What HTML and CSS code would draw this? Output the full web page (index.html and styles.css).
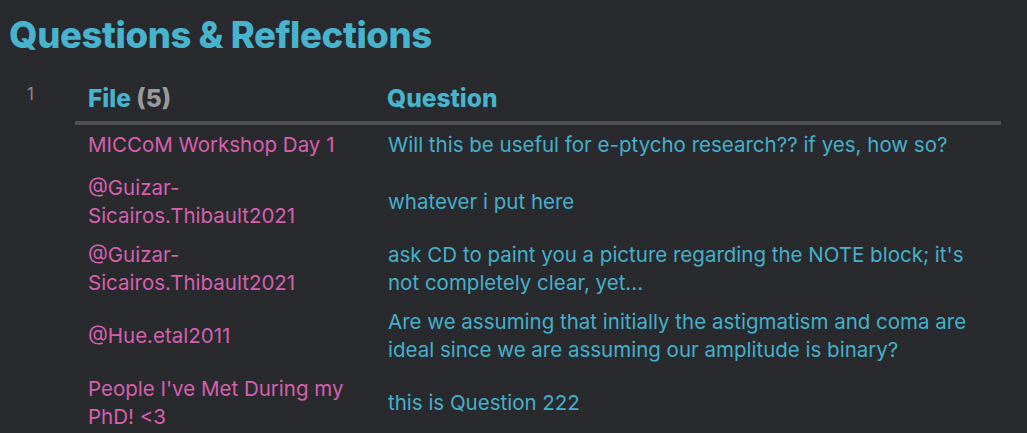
FILE: index.html
```html
<!DOCTYPE html>
<html>
<head>
<meta charset="utf-8">
<link rel="stylesheet" href="styles.css">
</head>
<body>
<div class="page">
  <h1 class="title">Questions &amp; Reflections</h1>
  <div class="block">
    <div class="lineno">1</div>
    <table class="dv">
      <colgroup><col class="c1"><col class="c2"></colgroup>
      <thead>
        <tr><th>File <span class="count">(5)</span></th><th>Question</th></tr>
      </thead>
      <tbody>
        <tr><td class="file">MICCoM Workshop Day 1</td><td class="q">Will this be useful for e-ptycho research?? if yes, how so?</td></tr>
        <tr><td class="file">@Guizar-Sicairos.Thibault2021</td><td class="q">whatever i put here</td></tr>
        <tr><td class="file">@Guizar-Sicairos.Thibault2021</td><td class="q">ask CD to paint you a picture regarding the NOTE block; it's not completely clear, yet...</td></tr>
        <tr><td class="file">@Hue.etal2011</td><td class="q">Are we assuming that initially the astigmatism and coma are ideal since we are assuming our amplitude is binary?</td></tr>
        <tr><td class="file">People I've Met During my PhD! &lt;3</td><td class="q">this is Question 222</td></tr>
      </tbody>
    </table>
  </div>
</div>
</body>
</html>
```

FILE: styles.css
```css
html, body {
  margin: 0;
  padding: 0;
  background: #292a2e;
}
body {
  font-family: Inter, "Noto Sans", sans-serif;
  color: #45b0cb;
}
.page {
  padding: 12px 26px 0 9px;
}
.title {
  margin: 0;
  font-size: 36.5px;
  font-weight: 800;
  line-height: 46px;
  color: #47b3cd;
  letter-spacing: -0.4px;
}
.block {
  display: flex;
  margin-top: 26px;
}
.lineno {
  width: 66px;
  padding-left: 18px;
  box-sizing: border-box;
  flex: none;
  color: #8b8b8b;
  font-size: 17px;
  line-height: 18px;
  padding-top: 1px;
}
.dv {
  border-collapse: collapse;
  width: 926px;
  table-layout: fixed;
}
.c1 { width: 300px; }
.dv th {
  text-align: left;
  font-size: 24.5px;
  font-weight: 800;
  color: #47b3cd;
  padding: 0 13px 9px 13px;
  line-height: 28px;
  border-bottom: 4px solid #505050;
}
.dv th:last-child {
  padding-left: 12px;
}
.count {
  color: #9a9a9a;
}
.dv td {
  font-size: 20.5px;
  line-height: 28px;
  padding: 5.5px 13px;
  vertical-align: middle;
}
.dv tbody tr:first-child td {
  padding-top: 6px;
  padding-bottom: 9px;
}
.file {
  color: #d660ae;
}
.q {
  color: #45b0cb;
  padding-left: 12px;
}
```
